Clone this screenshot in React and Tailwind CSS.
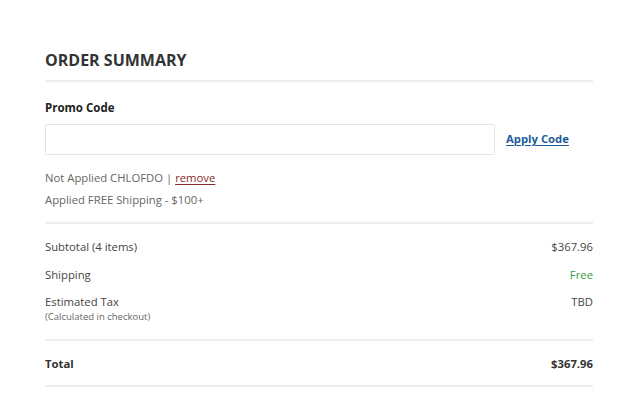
import React from 'react';

const rows = [
  { label: 'Subtotal (4 items)', value: '$367.96' },
  { label: 'Shipping', value: 'Free', green: true },
  { label: 'Estimated Tax', sub: '(Calculated in checkout)', value: 'TBD' },
];

export default function App() {
  return (
    <div className="w-[640px] h-[400px] bg-white text-[#444] overflow-hidden" style={{ fontFamily: '"Open Sans", sans-serif' }}>
      <div className="ml-[45px] w-[548px] pt-[49px]">
        <h2 className="text-[16px] leading-[22px] font-bold text-[#333]">ORDER SUMMARY</h2>
        <div className="mt-[9px] h-[2px] bg-[#eeeeee]" />

        <p className="mt-[18px] text-[11.5px] leading-[16px] font-bold text-[#222]">Promo Code</p>
        <div className="mt-[8px] flex items-center">
          <input className="w-[450px] h-[31px] border border-[#e3e3e3] rounded-[2px] outline-none px-2 text-[12px]" />
          <a href="#" className="ml-[11px] text-[11.3px] font-bold text-[#1c5b99] underline underline-offset-2">Apply Code</a>
        </div>

        <p className="mt-[15px] text-[11.3px] leading-[16px] text-[#666]">
          Not Applied CHLOFDO | <a href="#" className="text-[#8a2a2a] underline underline-offset-2">remove</a>
        </p>
        <p className="mt-[6px] text-[11.3px] leading-[16px] text-[#666]">Applied FREE Shipping - $100+</p>

        <div className="mt-[14px] h-[2px] bg-[#eeeeee]" />

        <div className="mt-[15px] flex flex-col gap-[11.5px]">
          {rows.map(r => (
            <div key={r.label} className="flex justify-between text-[11.3px] leading-[16px]">
              <div>
                <p>{r.label}</p>
                {r.sub && <p className="mt-[1px] text-[9.5px] leading-[12px] text-[#666]">{r.sub}</p>}
              </div>
              <p className={r.green ? 'text-[#3d9a3d]' : ''}>{r.value}</p>
            </div>
          ))}
        </div>

        <div className="mt-[16px] h-[2px] bg-[#eeeeee]" />
        <div className="mt-[15px] flex justify-between text-[11.3px] leading-[16px] font-bold text-[#333]">
          <p>Total</p>
          <p>$367.96</p>
        </div>
        <div className="mt-[13px] h-[2px] bg-[#eeeeee]" />
      </div>
    </div>
  );
}
